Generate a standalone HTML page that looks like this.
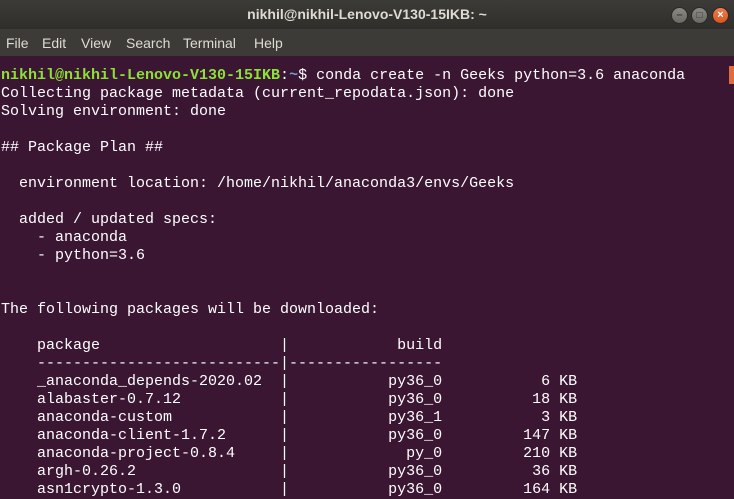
<!DOCTYPE html>
<html><head><meta charset="utf-8"><style>
*{margin:0;padding:0;box-sizing:border-box}
body{width:734px;height:488px;overflow:hidden;background:#3b1632;font-family:"Liberation Sans",sans-serif;position:relative}
.title{position:absolute;left:0;top:0;width:734px;height:29px;background:linear-gradient(#3c3b37,#2f2e2b);color:#dfdbd2;font-weight:bold;font-size:14px;text-align:center;line-height:29px}
.btn{position:absolute;top:7px;width:17px;height:17px;border-radius:50%;background:linear-gradient(#8a8983,#6b6a65);border:1px solid #2a2a28}
.btn.c{background:linear-gradient(#f37a4b,#d9551e)}
.btn span{position:absolute;left:0;top:0;width:15px;height:15px;color:#3a3935;font-size:11px;line-height:15px;text-align:center;font-weight:bold}
.menu{position:absolute;left:0;top:29px;width:734px;height:27px;background:#3c3b37;color:#dfdbd2;font-size:14px;line-height:28px}
.menu span{position:absolute}
pre{position:absolute;left:1px;top:67px;font-family:"Liberation Mono",monospace;font-size:15px;line-height:18px;color:#ffffff;white-space:pre}
.g{color:#8ae234;font-weight:bold}.b{color:#729fcf;font-weight:bold}
.cur{position:absolute;left:729px;top:66px;width:5px;height:18px;background:#df6c3c}
</style></head><body>
<div class="title">nikhil@nikhil-Lenovo-V130-15IKB: ~</div>
<div class="btn" style="left:671px"><span>–</span></div>
<div class="btn" style="left:691px"><span style="font-size:10px">□</span></div>
<div class="btn c" style="left:712px"><span style="color:#fff">×</span></div>
<div class="menu"><span style="left:6px">File</span><span style="left:42px">Edit</span><span style="left:81px">View</span><span style="left:126px">Search</span><span style="left:183px">Terminal</span><span style="left:254px">Help</span></div>
<pre><span class="g">nikhil@nikhil-Lenovo-V130-15IKB</span>:<span class="b">~</span>$ conda create -n Geeks python=3.6 anaconda
Collecting package metadata (current_repodata.json): done
Solving environment: done

## Package Plan ##

  environment location: /home/nikhil/anaconda3/envs/Geeks

  added / updated specs:
    - anaconda
    - python=3.6


The following packages will be downloaded:

    package                    |            build
    ---------------------------|-----------------
    _anaconda_depends-2020.02  |           py36_0           6 KB
    alabaster-0.7.12           |           py36_0          18 KB
    anaconda-custom            |           py36_1           3 KB
    anaconda-client-1.7.2      |           py36_0         147 KB
    anaconda-project-0.8.4     |             py_0         210 KB
    argh-0.26.2                |           py36_0          36 KB
    asn1crypto-1.3.0           |           py36_0         164 KB</pre>
<div class="cur"></div>
</body></html>
